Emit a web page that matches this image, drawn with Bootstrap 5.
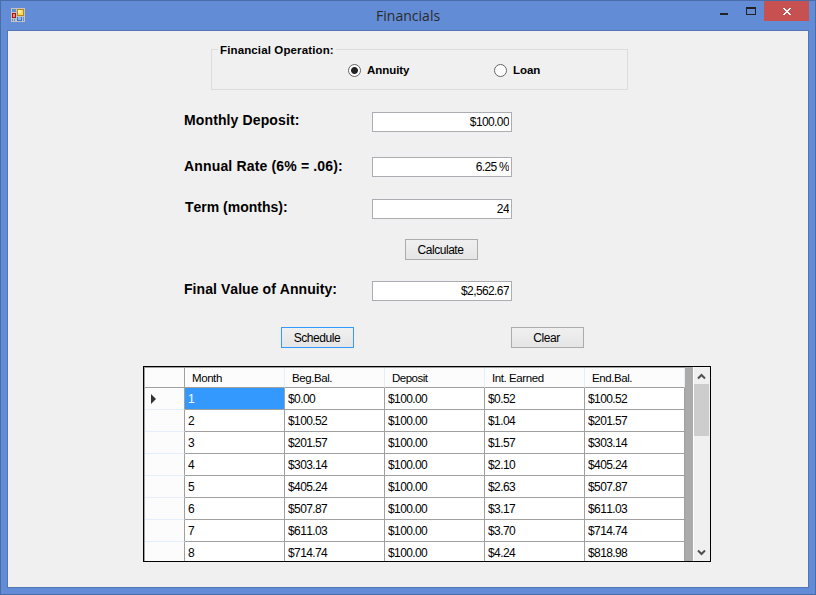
<!DOCTYPE html>
<html lang="en">
<head>
<meta charset="utf-8">
<title>Financials</title>
<meta name="viewport" content="width=device-width, initial-scale=1">
<link href="https://cdn.jsdelivr.net/npm/bootstrap@5.3.0/dist/css/bootstrap.min.css" rel="stylesheet">
<style>
body{margin:0;overflow:hidden;font-family:"Liberation Sans",Arial,sans-serif;font-size:12px;line-height:20px;color:#000;font-kerning:none}
.win{width:816px;height:595px;background:#628cd5;border:1px solid #4a6da7;padding:0 6px 6px}
.titlebar{height:29px}
.app-icon{width:14px;height:14px;margin:7px 0 0 4px}
.win-title{font-family:"Open Sans","Noto Sans",sans-serif;font-size:14px;line-height:29px;color:#2b2b2b;margin-left:351px;width:90px;letter-spacing:.02px}
.caption-btns{margin-right:1px}
.client{height:558px;background:#f0f0f0;border:1px solid #5275b5;line-height:20px}
.close-btn{width:45px;height:20px;background:#c75050;margin-right:-1px}
.group{width:417px;height:41px;border:1px solid #dcdcdc;margin:18px 0 0 203px}
.group-title{background:#f0f0f0;font-weight:700;font-size:11.5px;line-height:14px;margin:-7px 0 0 6px;padding:0 2px;width:118px;letter-spacing:.13px;white-space:nowrap}
.options{margin:6px 0 0 136px;line-height:15px}
.opt{font-weight:700;font-size:11.5px;letter-spacing:-.05px}
.opt-first{width:146px}
.opt input{appearance:none;width:13px;height:13px;border:1px solid #666;border-radius:50%;background:#fff;margin:0 6px 0 0}
.opt input:checked{background:radial-gradient(circle,#222 0 3px,#fff 3.9px)}
.frow{height:20px;margin-left:176px}
.row-deposit{margin-top:22px}
.row-rate{margin-top:25px}
.row-term{margin-top:22px}
.row-calc{margin:20px 0 0 397px}
.row-final{margin-top:21px}
.row-actions{margin:26px 0 0 273px;gap:157px}
.flabel{width:188px;font-weight:700;font-size:14px;line-height:16px;white-space:nowrap;letter-spacing:.12px}
.row-rate .flabel{line-height:18px;letter-spacing:.16px}
.row-term .flabel{padding-left:1px;letter-spacing:0}
.row-final .flabel{letter-spacing:.06px}
.fbox{width:140px;height:20px;border:1px solid #abadb3;border-radius:0;background:#fff;padding:0 2px 0 0;text-align:right;font-size:12px;line-height:18px;color:#000;letter-spacing:-.6px}
.row-rate .fbox{letter-spacing:-.7px}
.wbtn{width:73px;height:21px;border:1px solid #acacac;border-radius:0;padding:0 2px 0 0;font-size:12px;line-height:20px;color:#000;background:linear-gradient(#f0f0f0,#e5e5e5);letter-spacing:-.45px}
.wbtn.active-focus{border-color:#3399ff;padding-right:1px}
.gridbox{width:568px;height:196px;border:1px solid #000;background:#ababab;margin:18px 0 0 135px;overflow:hidden}
.sheet{width:541px;table-layout:fixed;border-collapse:separate;border-spacing:0;border-left:1px solid #a0a0a0;border-top:1px solid #a0a0a0;letter-spacing:-.6px;font-size:12px;line-height:20px}
.sheet th,.sheet td{width:100px;padding:0 0 0 3px;border-right:1px solid #a0a0a0;border-bottom:1px solid #a0a0a0;background:#fff;white-space:nowrap;height:22px;overflow:hidden}
.sheet thead th{height:20px;font-size:11.5px;line-height:18px;background:#fcfcfc;font-weight:400;padding-left:7px;border-right-color:#e5effb;letter-spacing:-.42px}
.sheet thead th:first-child{width:40px;border-right-color:#a0a0a0}
.sheet thead th:nth-child(4){letter-spacing:-.5px}
.sheet tbody th{background:#fcfcfc;border-bottom-color:#e5effb;padding:1px 0 0 5px}
.sheet td.sel{background:#3399ff;color:#fff}
.vscroll{width:17px;height:194px;background:#f0f0f0;border-left:1px solid #fff}
.thumb{height:52px;width:15px;background:#cdcdcd}
svg{display:block}
</style>
</head>
<body>
<div class="win d-flex flex-column">
  <header class="titlebar d-flex align-items-start">
    <svg class="app-icon" viewBox="0 0 14 14" shape-rendering="crispEdges">
      <path fill="#c5c3bd" d="M0 0h14v14H0z"/>
      <path fill="#628cd5" d="M1 1h4v3H1zM1 11h1v2H1zM3 11h1v2H3zM12 9h1v4h-1z"/>
      <path fill="#b9861b" d="M6 1h7v7H6z"/><path fill="#ffd95a" d="M7 2h5v5H7z"/><path fill="#fff0a2" d="M7 2h3v3H7z"/>
      <path fill="#a51414" d="M1 5h4v5H1z"/><path fill="#ee8b78" d="M2 6h2v3H2z"/>
      <path fill="#3b73cf" d="M6 9h5v4H6z"/><path fill="#8bb7f4" d="M7 9h3v3H7z"/>
    </svg>
    <div class="win-title">Financials</div>
    <div class="caption-btns d-flex ms-auto">
      <svg width="45" height="20" viewBox="0 0 45 20" shape-rendering="crispEdges"><path fill="#222" d="M1 12h8v2H1z"/><path fill="#222" d="M27 6h10v8H27zM28 8v5h8V8z" fill-rule="evenodd"/></svg>
      <div class="close-btn"><svg width="45" height="20" shape-rendering="crispEdges"><path fill="#fff" d="M19 7h2v1h1v1h2V8h1V7h2v1h-1v1h-1v1h-1v1h1v1h1v1h1v1h-2v-1h-1v-1h-2v1h-1v1h-2v-1h1v-1h1v-1h1v-1h-1V9h-1V8h-1z"/></svg></div>
    </div>
  </header>
  <main class="client">
    <section class="group">
      <div class="group-title">Financial Operation:</div>
      <div class="options d-flex">
        <label class="opt opt-first d-flex align-items-center"><input type="radio" name="op" checked>Annuity</label>
        <label class="opt d-flex align-items-center"><input type="radio" name="op">Loan</label>
      </div>
    </section>
    <div class="frow row-deposit d-flex"><label class="flabel">Monthly Deposit:</label><input class="fbox" value="$100.00"></div>
    <div class="frow row-rate d-flex"><label class="flabel">Annual Rate (6% = .06):</label><input class="fbox" value="6.25 %"></div>
    <div class="frow row-term d-flex"><label class="flabel">Term (months):</label><input class="fbox" value="24"></div>
    <div class="row-calc d-flex"><button class="btn wbtn">Calculate</button></div>
    <div class="frow row-final d-flex"><label class="flabel">Final Value of Annuity:</label><input class="fbox" value="$2,562.67"></div>
    <div class="row-actions d-flex"><button class="btn wbtn active-focus">Schedule</button><button class="btn wbtn">Clear</button></div>
    <section class="gridbox d-flex justify-content-between">
      <table class="sheet">
        <thead><tr><th></th><th>Month</th><th>Beg.Bal.</th><th>Deposit</th><th>Int. Earned</th><th>End.Bal.</th></tr></thead>
        <tbody>
          <tr><th><svg width="7" height="10"><path fill="#333" d="M1 0l5 5-5 5z"/></svg></th><td class="sel">1</td><td>$0.00</td><td>$100.00</td><td>$0.52</td><td>$100.52</td></tr>
          <tr><th></th><td>2</td><td>$100.52</td><td>$100.00</td><td>$1.04</td><td>$201.57</td></tr>
          <tr><th></th><td>3</td><td>$201.57</td><td>$100.00</td><td>$1.57</td><td>$303.14</td></tr>
          <tr><th></th><td>4</td><td>$303.14</td><td>$100.00</td><td>$2.10</td><td>$405.24</td></tr>
          <tr><th></th><td>5</td><td>$405.24</td><td>$100.00</td><td>$2.63</td><td>$507.87</td></tr>
          <tr><th></th><td>6</td><td>$507.87</td><td>$100.00</td><td>$3.17</td><td>$611.03</td></tr>
          <tr><th></th><td>7</td><td>$611.03</td><td>$100.00</td><td>$3.70</td><td>$714.74</td></tr>
          <tr><th></th><td>8</td><td>$714.74</td><td>$100.00</td><td>$4.24</td><td>$818.98</td></tr>
        </tbody>
      </table>
      <div class="vscroll d-flex flex-column">
        <svg width="16" height="17"><path fill="none" stroke="#505050" stroke-width="2" d="M4 11.5L7.5 8 11 11.5"/></svg>
        <div class="thumb"></div>
        <svg class="mt-auto" width="16" height="17"><path fill="none" stroke="#505050" stroke-width="2" d="M4 6.5L7.5 10 11 6.5"/></svg>
      </div>
    </section>
  </main>
</div>
<script src="https://cdn.jsdelivr.net/npm/bootstrap@5.3.0/dist/js/bootstrap.bundle.min.js"></script>
</body>
</html>
